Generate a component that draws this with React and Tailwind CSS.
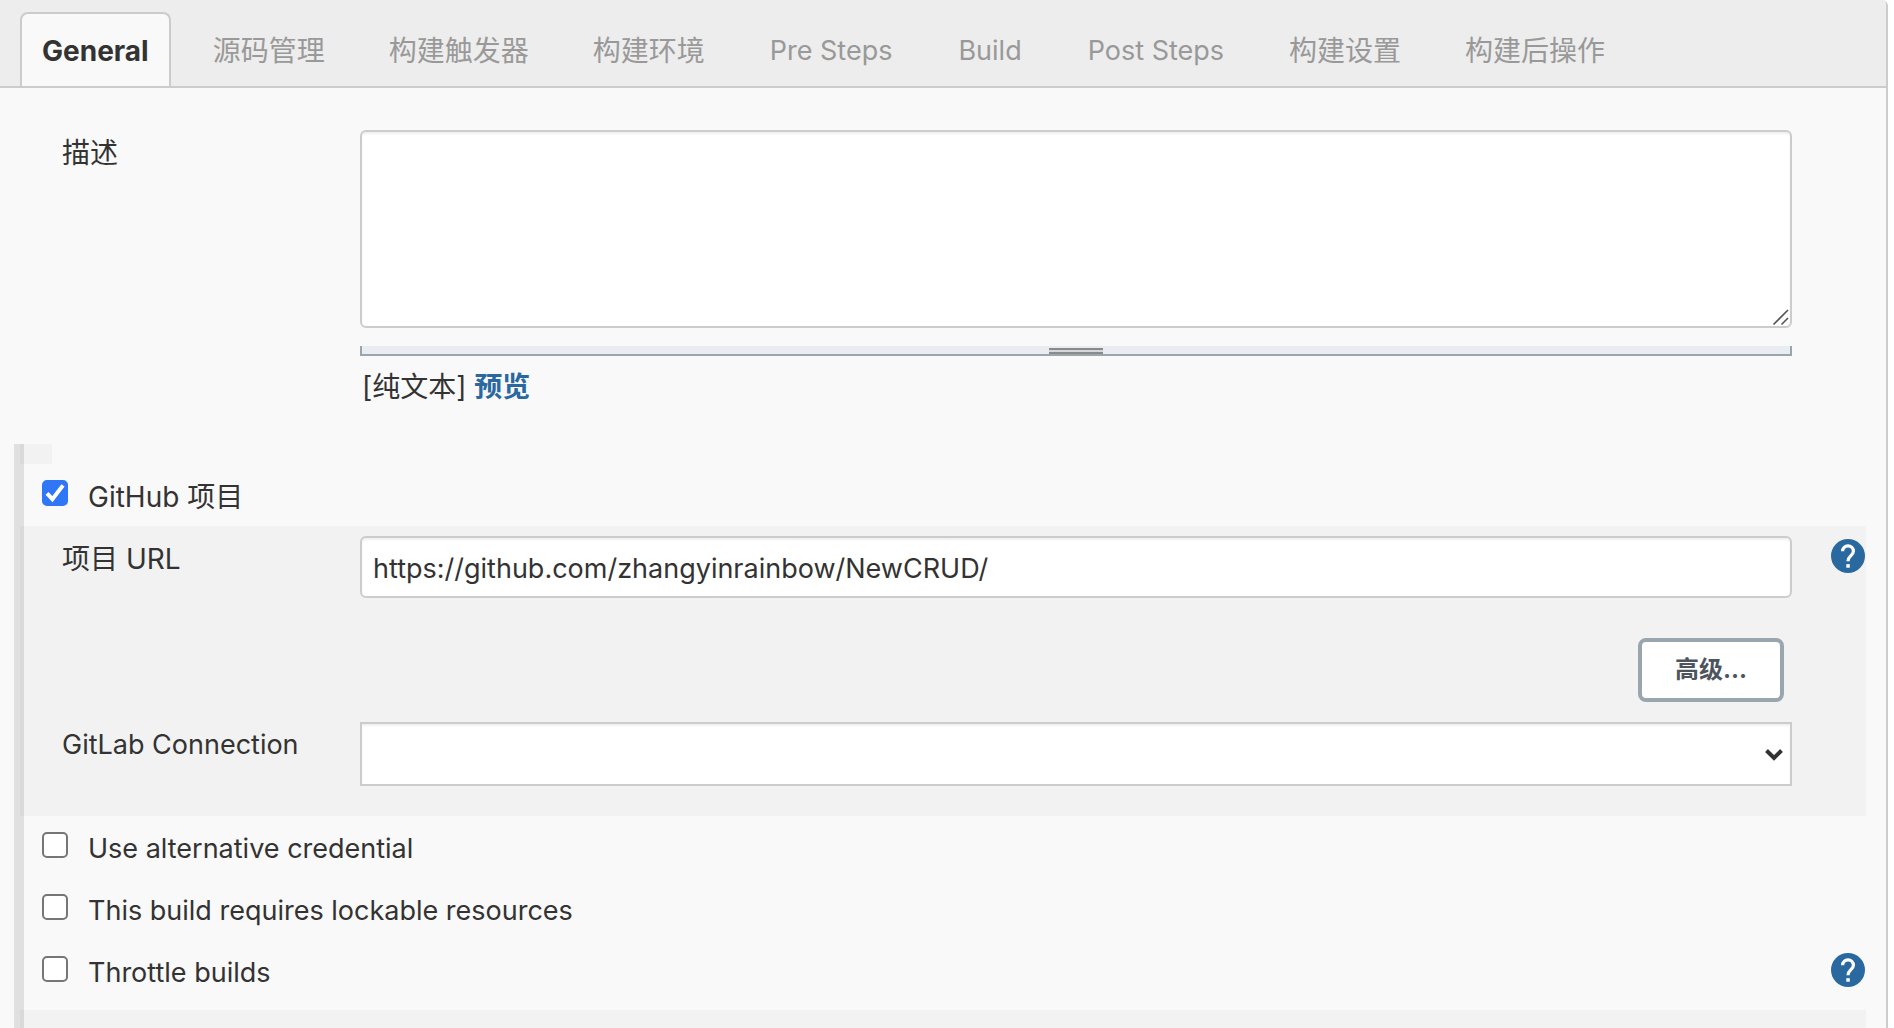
import { useState } from 'react'

const TABS = [
  { label: 'General' },
  { label: '源码管理' },
  { label: '构建触发器' },
  { label: '构建环境' },
  { label: 'Pre Steps', latin: true },
  { label: 'Build', latin: true },
  { label: 'Post Steps', latin: true },
  { label: '构建设置' },
  { label: '构建后操作' },
]

const FIELD = 'block w-full border-2 border-[#ccc] bg-white shadow-[inset_0_2px_2px_rgba(0,0,0,0.06)] outline-none'

function HelpButton({ label }) {
  return (
    <button type="button" aria-label={label} className="block size-[34px] cursor-pointer">
      <svg viewBox="0 0 34 34" className="block size-full" aria-hidden="true">
        <circle cx="17" cy="17" r="17" fill="#2a699f" />
        <path
          d="M11.6 12.2a5.4 5.4 0 1 1 10.8 0c0 4.4-5.4 4.6-5.4 10"
          fill="none"
          stroke="#fff"
          strokeWidth="3.2"
        />
        <rect x="15.3" y="25.2" width="3.5" height="3.5" fill="#fff" />
      </svg>
    </button>
  )
}

function CheckRow({ id, label, cjk, defaultChecked, help }) {
  return (
    <div className="flex h-[62px] items-start border-l-4 border-[#e0e0e0] pt-4 pr-[21px] pl-[18px]">
      <div className="relative size-[26px]">
        <input
          id={id}
          type="checkbox"
          defaultChecked={defaultChecked}
          className="peer block size-[26px] appearance-none rounded-[5px] border-2 border-[#767676] bg-white checked:border-[#2f77f7] checked:bg-[#2f77f7]"
        />
        <svg viewBox="0 0 26 26" className="pointer-events-none absolute inset-0 hidden size-[26px] peer-checked:block" aria-hidden="true">
          <path d="M5 13.4l5.4 5.8L21 5.4" fill="none" stroke="#fff" strokeWidth="4" />
        </svg>
      </div>
      <label htmlFor={id} className={`ml-5 leading-[34px] ${cjk ? 'text-[28px]' : ''}`}>{label}</label>
      {help && <div className="ml-auto -mt-[3px]"><HelpButton label={`Help: ${label}`} /></div>}
    </div>
  )
}

function FormRow({ id, label, cjk, help, children }) {
  return (
    <div className="flex items-start">
      <label htmlFor={id} className={`w-[298px] shrink-0 leading-[46px] ${cjk ? 'text-[28px]' : ''}`}>{label}</label>
      <div className="min-w-0 flex-1">{children}</div>
      <div className="flex w-[74px] shrink-0 justify-end pt-[3px] pr-px">
        {help && <HelpButton label={`Help: ${label}`} />}
      </div>
    </div>
  )
}

export default function App() {
  const [active, setActive] = useState('General')
  const [url, setUrl] = useState('https://github.com/zhangyinrainbow/NewCRUD/')

  return (
    <div className="min-h-screen bg-white pr-1.5 font-['Inter','Noto_Sans_CJK_SC',sans-serif] text-[27px] text-[#333]">
      <div className="flex min-h-screen flex-col rounded-tr-md border-r-2 border-[#ccc] bg-[#f9f9f9]">

        {/* Tabs */}
        <nav className="flex h-[88px] gap-5 rounded-tr-sm border-b-2 border-[#ccc] bg-[#ededed] pt-3 pl-5">
          {TABS.map(({ label, latin }) => (
            <button
              key={label}
              type="button"
              onClick={() => setActive(label)}
              className={`cursor-pointer rounded-t-lg border-2 border-b-0 pt-0.5 whitespace-nowrap ${
                latin ? 'px-[21px]' : 'px-5 text-[28px]'
              } ${
                label === active ? 'border-[#ccc] bg-[#f9f9f9] font-bold' : 'border-transparent text-[#999]'
              }`}
            >
              {label}
            </button>
          ))}
        </nav>

        {/* Description */}
        <div className="pt-[42px] pr-5 pl-[62px]">
          <FormRow id="description" label="描述" cjk>
            <div className="relative">
              <textarea id="description" className={`${FIELD} h-[198px] resize-none rounded-md p-2.5`} />
              <svg viewBox="0 0 18 18" className="pointer-events-none absolute right-0.5 bottom-0.5 size-[18px]" aria-hidden="true">
                <path d="M1.5 16.5L16 2M9.5 16.5L16 10" stroke="#555" strokeWidth="1.6" />
              </svg>
            </div>
            <div className="mt-[18px] flex h-2.5 cursor-ns-resize justify-center border-x-2 border-b-2 border-[#9aa6ad] bg-[#e9edf1] pt-0.5">
              <div className="h-1.5 w-[54px] border-y-2 border-[#878b89] bg-[#d4d8d9]" />
            </div>
            <div className="mt-2.5 pl-0.5 text-[28px] leading-[42px]">
              [纯文本] <a href="#preview" className="font-bold text-[#2a699f]">预览</a>
            </div>
          </FormRow>
        </div>

        {/* Options */}
        <div className="mt-9 ml-3.5 flex flex-1 flex-col border-l-[6px] border-[#e0e0e0]">
          <div className="h-5 w-8 border-l-4 border-[#d9d9d9] bg-[#f2f2f2]" />
          <CheckRow id="github" label="GitHub 项目" cjk defaultChecked />

          <div className="mr-5 border-l-4 border-[#d9d9d9] bg-[#f2f2f2] pt-2.5 pb-[30px] pl-[38px]">
            <FormRow id="project-url" label="项目 URL" cjk help>
              <input
                id="project-url"
                type="text"
                value={url}
                onChange={e => setUrl(e.target.value)}
                className={`${FIELD} h-[62px] rounded-md px-[11px] pt-0.5`}
              />
              <div className="mt-10 mb-5 flex justify-end pr-2">
                <button type="button" className="h-16 cursor-pointer rounded-lg border-4 border-[#9aa6ad] bg-white px-[33px] text-2xl font-bold text-[#4d545d]">
                  高级...
                </button>
              </div>
            </FormRow>
            <FormRow id="gitlab" label="GitLab Connection">
              <div className="relative">
                <select id="gitlab" className={`${FIELD} h-16 appearance-none rounded-none px-2.5`}>
                  <option value="" />
                </select>
                <svg viewBox="0 0 18 12" className="pointer-events-none absolute top-[27px] right-[9px] h-3 w-[18px]" aria-hidden="true">
                  <path d="M1.5 1.5L9 9l7.5-7.5" fill="none" stroke="#333" strokeWidth="4" />
                </svg>
              </div>
            </FormRow>
          </div>

          <CheckRow id="credential" label="Use alternative credential" />
          <CheckRow id="lockable" label="This build requires lockable resources" />
          <CheckRow id="throttle" label="Throttle builds" help />
          <div className="h-2 border-l-4 border-[#e0e0e0]" />
          <div className="mr-5 flex-1 border-l-4 border-[#d9d9d9] bg-[#f2f2f2]" />
        </div>
      </div>
    </div>
  )
}
